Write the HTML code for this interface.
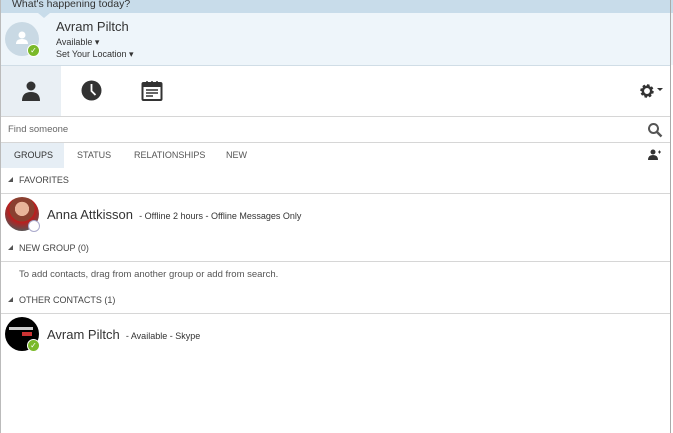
<html><head><style>
body{margin:0;width:673px;height:433px;overflow:hidden;background:#fff;font-family:"Liberation Sans",sans-serif;position:relative}
.a{position:absolute}
.line{position:absolute;left:0;width:671px;height:1px;background:#d6d6d6}
.sec{position:absolute;left:8px;font-size:9px;color:#444}
.sec:before{content:"";display:inline-block;border-left:5px solid transparent;border-bottom:5px solid #555;margin-right:6px;vertical-align:1px}
</style></head><body>
<div class="a" style="left:0;top:0;width:673px;height:13px;background:#c8dcea"></div>
<div class="a" style="left:12px;top:-2px;font-size:10.5px;color:#333">What's happening today?</div>
<div class="a" style="left:0;top:13px;width:673px;height:52px;background:#eef5fa"></div>
<div class="a" style="left:38px;top:13px;width:0;height:0;border-left:6px solid transparent;border-right:6px solid transparent;border-top:5px solid #c8dcea"></div>
<div class="a" style="left:5px;top:22px;width:34px;height:34px;border-radius:50%;background:#c9d9e4"></div>
<svg class="a" style="left:13px;top:29px" width="18" height="18" viewBox="0 0 18 18"><circle cx="9" cy="6" r="3.5" fill="#fff"/><path d="M3 15q0-5 6-5t6 5z" fill="#fff"/></svg>
<div class="a" style="left:27px;top:44px;width:11px;height:11px;border-radius:50%;background:#7ab929;border:1px solid #fff;color:#fff;font-size:8px;line-height:11px;text-align:center">✓</div>
<div class="a" style="left:56px;top:19px;font-size:13px;color:#333">Avram Piltch</div>
<div class="a" style="left:56px;top:37px;font-size:9px;color:#333">Available ▾</div>
<div class="a" style="left:56px;top:49px;font-size:9px;color:#333">Set Your Location ▾</div>
<div class="line" style="top:65px;background:#d0dde6"></div>
<div class="a" style="left:0;top:66px;width:61px;height:50px;background:#e9eff4"></div>
<svg class="a" style="left:20px;top:80px" width="22" height="22" viewBox="0 0 22 22"><circle cx="11" cy="6" r="4.5" fill="#333"/><path d="M2 21q0-9 9-9t9 9z" fill="#333"/></svg>
<svg class="a" style="left:81px;top:80px" width="21" height="21" viewBox="0 0 21 21"><circle cx="10.5" cy="10.5" r="10" fill="#333"/><path d="M10.5 4v7l4 4" stroke="#fff" stroke-width="1.8" fill="none"/></svg>
<svg class="a" style="left:141px;top:80px" width="22" height="22" viewBox="0 0 22 22"><rect x="1.5" y="3" width="19" height="17" rx="1" fill="none" stroke="#333" stroke-width="2"/><rect x="1.5" y="3" width="19" height="4" fill="#333"/><path d="M5 10h12M5 13h12M5 16h7" stroke="#333" stroke-width="1.6"/><path d="M6 1v3M11 1v3M16 1v3" stroke="#333" stroke-width="1.5"/></svg>
<svg class="a" style="left:639px;top:83px" width="16" height="16" viewBox="0 0 16 16"><circle cx="8" cy="8" r="5" fill="none" stroke="#333" stroke-width="3.5" stroke-dasharray="2.2 1.7"/><circle cx="8" cy="8" r="4.2" fill="none" stroke="#333" stroke-width="2.5"/></svg>
<div class="a" style="left:657px;top:88px;border-left:3px solid transparent;border-right:3px solid transparent;border-top:3px solid #333"></div>
<div class="line" style="top:116px"></div>
<div class="a" style="left:8px;top:124px;font-size:9.5px;color:#666">Find someone</div>
<svg class="a" style="left:647px;top:122px" width="16" height="16" viewBox="0 0 16 16"><circle cx="6.5" cy="6.5" r="4.5" fill="none" stroke="#555" stroke-width="2"/><path d="M10 10l4.5 4.5" stroke="#555" stroke-width="2.4"/></svg>
<div class="line" style="top:142px"></div>
<div class="a" style="left:0;top:143px;width:64px;height:25px;background:#e6eef5"></div>
<div class="a" style="left:14px;top:150px;font-size:9px;color:#333">GROUPS</div>
<div class="a" style="left:77px;top:150px;font-size:9px;color:#555">STATUS</div>
<div class="a" style="left:134px;top:150px;font-size:9px;color:#555">RELATIONSHIPS</div>
<div class="a" style="left:226px;top:150px;font-size:9px;color:#555">NEW</div>
<svg class="a" style="left:648px;top:149px" width="14" height="12" viewBox="0 0 14 12"><circle cx="5" cy="3" r="2.5" fill="#333"/><path d="M0 11q0-5 5-5t5 5z" fill="#333"/><path d="M10 3h3M11.5 1.5v3" stroke="#333"/></svg>
<div class="sec" style="top:175px">FAVORITES</div>
<div class="line" style="top:193px"></div>
<div class="a" style="left:5px;top:197px;width:34px;height:34px;border-radius:50%;background:radial-gradient(circle at 50% 35%,#e8b49a 0 25%,#8a4030 26% 45%,#c01b1b 46%,#555 80%)"></div>
<div class="a" style="left:28px;top:220px;width:10px;height:10px;border-radius:50%;background:#fff;border:1px solid #aac"></div>
<div class="a" style="left:47px;top:207px;font-size:13px;color:#333">Anna Attkisson <span style="font-size:9px">&nbsp;- Offline 2 hours - Offline Messages Only</span></div>
<div class="sec" style="top:243px">NEW GROUP (0)</div>
<div class="line" style="top:261px"></div>
<div class="a" style="left:19px;top:269px;font-size:9.5px;color:#555">To add contacts, drag from another group or add from search.</div>
<div class="sec" style="top:295px">OTHER CONTACTS (1)</div>
<div class="line" style="top:313px"></div>
<div class="a" style="left:5px;top:317px;width:34px;height:34px;border-radius:50%;background:#000"></div>
<div class="a" style="left:9px;top:327px;width:24px;height:3px;background:#ccc"></div>
<div class="a" style="left:22px;top:332px;width:10px;height:4px;background:#c33"></div>
<div class="a" style="left:27px;top:339px;width:11px;height:11px;border-radius:50%;background:#7ab929;border:1px solid #fff;color:#fff;font-size:8px;line-height:11px;text-align:center">✓</div>
<div class="a" style="left:47px;top:327px;font-size:13px;color:#333">Avram Piltch <span style="font-size:9px">&nbsp;- Available - Skype</span></div>
<div class="a" style="left:0;top:0;width:1px;height:433px;background:#bbb"></div>
<div class="a" style="left:670px;top:0;width:1px;height:433px;background:#aaa"></div>
</body></html>
